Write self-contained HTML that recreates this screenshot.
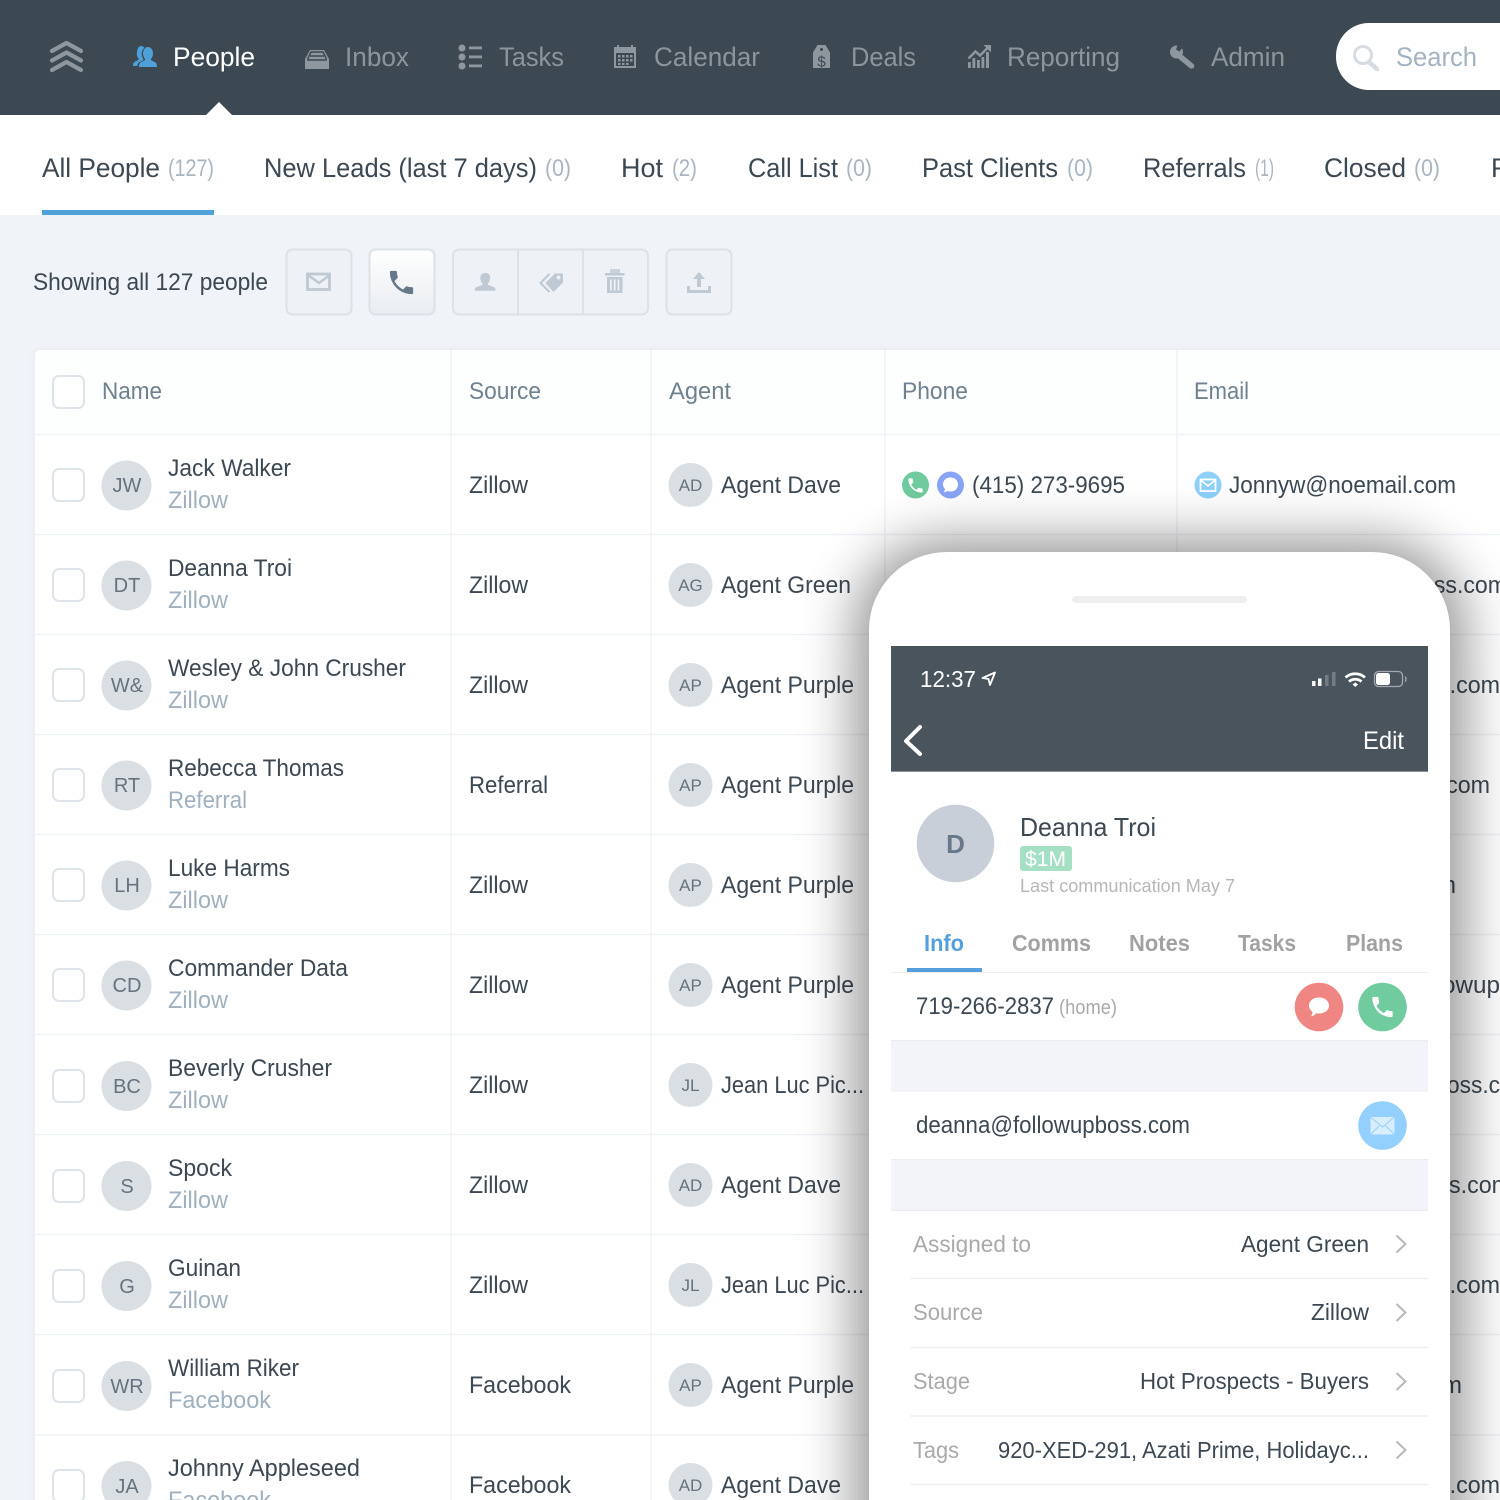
<!DOCTYPE html>
<html lang="en"><head><meta charset="utf-8"><title>People</title>
<style>
html,body{margin:0;padding:0;width:1500px;height:1500px;overflow:hidden;background:#f0f3f8}
svg{display:block}
text{font-family:"Liberation Sans",sans-serif;font-size:24px;fill:#3c4852}
.nav{font-size:27px;fill:#8d959c}
.tab{font-size:26.5px;fill:#3c4852}
.cnt{font-size:24px;fill:#a9b6c2}
.hd{fill:#6f808e;font-size:24px}
.sub{fill:#9fb0bf;font-size:24px}
.ini{font-size:20px;fill:#66737f;text-anchor:middle}
.ini2{font-size:17px;fill:#66737f;text-anchor:middle}
.ptab{font-size:23px;font-weight:bold;fill:#a2a2a2}
.lbl{fill:#a9a9a9;font-size:23px}
.val{fill:#3c4852;font-size:23px}
</style></head><body>
<svg width="1500" height="1500" viewBox="0 0 1500 1500" xmlns="http://www.w3.org/2000/svg">
<defs>
<filter id="blur" x="-30%" y="-30%" width="160%" height="160%"><feGaussianBlur stdDeviation="27"/></filter>
<filter id="soft" x="-5%" y="-5%" width="110%" height="110%"><feGaussianBlur stdDeviation="2"/></filter>
<linearGradient id="wg" x1="0" y1="0" x2="0" y2="1"><stop offset="0" stop-color="#fff"/><stop offset="1" stop-color="#e9edf0"/></linearGradient>
<symbol id="ph" viewBox="0 0 24 24"><path d="M6.6 10.8c1.4 2.8 3.8 5.1 6.6 6.6l2.2-2.2c.3-.3.7-.4 1-.2 1.1.4 2.3.6 3.6.6.6 0 1 .4 1 1V20c0 .6-.4 1-1 1C10.6 21 3 13.4 3 4c0-.6.4-1 1-1h3.5c.6 0 1 .4 1 1 0 1.3.2 2.5.6 3.6.1.3 0 .7-.2 1z"/></symbol>
</defs>
<rect width="1500" height="1500" fill="#f0f3f8"/>

<!-- top nav -->
<rect width="1500" height="115" fill="#3c4852"/>
<path d="M206 115L219 102L232 115Z" fill="#fff"/>
<g fill="none" stroke="#8f979e" stroke-width="4.2" stroke-linecap="round" stroke-linejoin="round">
<path d="M52 51L66.500 43L81 51"/><path d="M52 60.500L66.500 52.500L81 60.500"/><path d="M52 70L66.500 62L81 70"/>
</g>
<g fill="#4f9fd8">
<path d="M148 47c3 0 5 3 5 6.500 0 2.500-1 4.500-2.200 5.500 0 1.500 2 2 4 3 1.500.7 2.200 2 2.200 5h-18c0-3 .7-4.300 2.200-5 2-1 4-1.500 4-3-1.200-1-2.200-3-2.200-5.500 0-3.500 2-6.500 5-6.500z"/>
<path d="M141 46c1.500 0 2.800.8 3.500 1.800-1.800 1.500-2.800 3.500-2.800 6 0 2.500 1 4.500 2 6-1 1-3 1.500-4.500 2.500-1 .7-1.700 2-1.900 3.700H133c0-2.700.8-3.800 2.200-4.500 1.800-.9 3.500-1.300 3.600-2.700-1.100-1-2-2.800-2-5 0-4 1.800-7.800 4.200-7.800z"/>
</g>
<text class="nav" x="173" y="66" textLength="82" lengthAdjust="spacingAndGlyphs" style="fill:#fff">People</text>
<path d="M310 50h14l5 9v10h-24V59z" fill="#8f979e"/><path d="M308 60h18v-2l-3-6h-12l-3 6zM310 56h14" fill="none" stroke="#3c4852" stroke-width="1.500"/>
<text class="nav" x="345" y="66" textLength="64" lengthAdjust="spacingAndGlyphs">Inbox</text>
<g fill="#8f979e"><circle cx="462" cy="48" r="3.500"/><circle cx="462" cy="57" r="3.500"/><circle cx="462" cy="66" r="3.500"/><rect x="469" y="46.500" width="13" height="2.800"/><rect x="469" y="55.500" width="13" height="2.800"/><rect x="469" y="64.500" width="13" height="2.800"/></g>
<text class="nav" x="499" y="66" textLength="65" lengthAdjust="spacingAndGlyphs">Tasks</text>
<g fill="#8f979e"><path d="M614 47h3v-2h2v2h12v-2h2v2h3v21h-22zM616 53v13h18V53z" fill-rule="evenodd"/>
<path d="M618 55h2.500v2.500H618zM622 55h2.500v2.500H622zM626 55h2.500v2.500H626zM630 55h2.500v2.500H630zM618 59h2.500v2.500H618zM622 59h2.500v2.500H622zM626 59h2.500v2.500H626zM630 59h2.500v2.500H630zM618 63h2.500v2H618zM622 63h2.500v2H622zM626 63h2.500v2H626z"/></g>
<text class="nav" x="654" y="66" textLength="106" lengthAdjust="spacingAndGlyphs">Calendar</text>
<path d="M817.500 45h8l4.500 7.500V68h-17V52.500z" fill="#8f979e"/><circle cx="821.500" cy="49.500" r="1.500" fill="#3c4852"/>
<text x="821.500" y="66.500" style="font-size:15px;fill:#3c4852" text-anchor="middle">$</text>
<text class="nav" x="851" y="66" textLength="65" lengthAdjust="spacingAndGlyphs">Deals</text>
<g fill="#8f979e"><rect x="968" y="62" width="2.800" height="6"/><rect x="972.500" y="58" width="2.800" height="10"/><rect x="977" y="60" width="2.800" height="8"/><rect x="981.500" y="57" width="2.800" height="11"/><rect x="986" y="52" width="3" height="16"/><path d="M983.500 45h7.500v7.500z"/></g>
<path d="M968.500 58.500L975.500 51.500L980 55.500L988.500 47" fill="none" stroke="#8f979e" stroke-width="2.500"/>
<text class="nav" x="1007" y="66" textLength="113" lengthAdjust="spacingAndGlyphs">Reporting</text>
<circle cx="1176.500" cy="52" r="6.500" fill="#8f979e"/>
<path d="M1178 44L1184 46L1179.500 51.500L1176 49.500z" fill="#3c4852"/>
<path d="M1179.500 56L1191.500 66" stroke="#8f979e" stroke-width="5.500" stroke-linecap="round"/>
<text class="nav" x="1211" y="66" textLength="74" lengthAdjust="spacingAndGlyphs">Admin</text>
<rect x="1336" y="23" width="240" height="67" rx="33" fill="#fff"/>
<circle cx="1363" cy="55" r="8.500" fill="none" stroke="#d6dce2" stroke-width="3"/><path d="M1369 62l8 7" stroke="#d6dce2" stroke-width="4.500" stroke-linecap="round"/>
<text class="nav" x="1396" y="66" textLength="81" lengthAdjust="spacingAndGlyphs" style="fill:#a3b3c2">Search</text>

<!-- list tabs -->
<rect y="115" width="1500" height="100" fill="#fff"/>
<rect x="42" y="210" width="172" height="5" fill="#50a0da"/>
<text class="tab" x="42" y="177" textLength="118" lengthAdjust="spacingAndGlyphs">All People</text><text class="cnt" x="168" y="176" textLength="46" lengthAdjust="spacingAndGlyphs">(127)</text>
<text class="tab" x="264" y="177" textLength="273" lengthAdjust="spacingAndGlyphs">New Leads (last 7 days)</text><text class="cnt" x="545" y="176" textLength="26" lengthAdjust="spacingAndGlyphs">(0)</text>
<text class="tab" x="621" y="177" textLength="42" lengthAdjust="spacingAndGlyphs">Hot</text><text class="cnt" x="672" y="176" textLength="25" lengthAdjust="spacingAndGlyphs">(2)</text>
<text class="tab" x="748" y="177" textLength="90" lengthAdjust="spacingAndGlyphs">Call List</text><text class="cnt" x="846" y="176" textLength="26" lengthAdjust="spacingAndGlyphs">(0)</text>
<text class="tab" x="922" y="177" textLength="136" lengthAdjust="spacingAndGlyphs">Past Clients</text><text class="cnt" x="1067" y="176" textLength="26" lengthAdjust="spacingAndGlyphs">(0)</text>
<text class="tab" x="1143" y="177" textLength="103" lengthAdjust="spacingAndGlyphs">Referrals</text><text class="cnt" x="1255" y="176" textLength="19" lengthAdjust="spacingAndGlyphs">(1)</text>
<text class="tab" x="1324" y="177" textLength="82" lengthAdjust="spacingAndGlyphs">Closed</text><text class="cnt" x="1414" y="176" textLength="26" lengthAdjust="spacingAndGlyphs">(0)</text>
<text class="tab" x="1491" y="177">R</text>

<!-- toolbar -->
<text x="33" y="290" textLength="235" lengthAdjust="spacingAndGlyphs">Showing all 127 people</text>
<g fill="#eef1f5" stroke="#dde2e7" stroke-width="2">
<rect x="286.500" y="249.500" width="65" height="65" rx="6"/>
<rect x="369.500" y="249.500" width="65" height="65" rx="6" fill="url(#wg)"/>
<rect x="453" y="249.500" width="195" height="65" rx="6"/>
<path d="M518 249.500v65M583 249.500v65" fill="none"/>
<rect x="666.500" y="249.500" width="65" height="65" rx="6"/>
</g>
<rect x="307.500" y="274" width="22" height="15.500" fill="none" stroke="#bfc9d3" stroke-width="2.800"/><path d="M308 275l11 8 11-8" fill="none" stroke="#bfc9d3" stroke-width="2.500"/>
<use href="#ph" x="386" y="267" width="31" height="31" fill="#66798a"/>
<path d="M485.500 273c3.500 0 5 2.500 4.500 6-.3 2.200-1.200 3.800-2.300 4.800 0 1.500 2.500 2 5 2.800 1.800.6 3 1.500 3 4.200h-21c0-2.700 1.200-3.600 3-4.200 2.500-.8 5-1.300 5-2.800-1.100-1-2-2.600-2.300-4.800-.5-3.500 1-6 5.100-6z" fill="#bfc9d3"/>
<path d="M545.500 283l9.500-9.500h8v9l-9.500 9.500zM558.500 275.500a2 2 0 1 0 .1 0z" fill="#bfc9d3" fill-rule="evenodd"/><path d="M549.500 274l-9 9 9 9" fill="none" stroke="#bfc9d3" stroke-width="2"/>
<g fill="#bfc9d3"><rect x="605" y="273" width="19.500" height="2.500"/><rect x="611" y="270" width="8" height="2" fill="none" stroke="#bfc9d3" stroke-width="1.500"/><path d="M607 277h15.500v16H607zM610 279.500v11h1.800v-11zM613.800 279.500v11h1.800v-11zM617.600 279.500v11h1.800v-11z" fill-rule="evenodd"/></g>
<path d="M699 272l6 7h-4v8h-4v-8h-4zM687 286h3v4h18v-4h3v7h-24z" fill="#bfc9d3"/>

<!-- table -->
<rect x="34" y="349" width="1500" height="1200" rx="6" fill="#dfe4ea" filter="url(#soft)" opacity=".6"/>
<rect x="35" y="350" width="1500" height="1200" rx="5" fill="#fff"/>
<rect x="35" y="350" width="1500" height="84" rx="5" fill="#fdfefe"/>
<g stroke="#eff2f6" stroke-width="1.500" fill="none">
<path d="M35 434.500H1500M35 534.500H1500M35 634.500H1500M35 734.500H1500M35 834.500H1500M35 934.500H1500M35 1034.500H1500M35 1134.500H1500M35 1234.500H1500M35 1334.500H1500M35 1435H1500"/>
<path d="M451 350V1500M651 350V1500M885 350V1500M1177 350V1500"/>
</g>
<g fill="#fff" stroke="#dfe4ea" stroke-width="2">
<rect x="53" y="376" width="31" height="32" rx="6"/>
<rect x="53" y="469" width="31" height="32" rx="6"/><rect x="53" y="569" width="31" height="32" rx="6"/><rect x="53" y="669" width="31" height="32" rx="6"/><rect x="53" y="769" width="31" height="32" rx="6"/><rect x="53" y="869" width="31" height="32" rx="6"/><rect x="53" y="969" width="31" height="32" rx="6"/><rect x="53" y="1070" width="31" height="32" rx="6"/><rect x="53" y="1170" width="31" height="32" rx="6"/><rect x="53" y="1270" width="31" height="32" rx="6"/><rect x="53" y="1370" width="31" height="32" rx="6"/><rect x="53" y="1470" width="31" height="32" rx="6"/>
</g>
<text class="hd" x="102" y="399" textLength="60" lengthAdjust="spacingAndGlyphs">Name</text>
<text class="hd" x="469" y="399" textLength="72" lengthAdjust="spacingAndGlyphs">Source</text>
<text class="hd" x="669" y="399" textLength="62" lengthAdjust="spacingAndGlyphs">Agent</text>
<text class="hd" x="902" y="399" textLength="66" lengthAdjust="spacingAndGlyphs">Phone</text>
<text class="hd" x="1194" y="399" textLength="55" lengthAdjust="spacingAndGlyphs">Email</text>

<g fill="#dadfe4">
<circle cx="126.500" cy="485.500" r="25"/><circle cx="126.500" cy="585.500" r="25"/><circle cx="126.500" cy="685.500" r="25"/><circle cx="126.500" cy="785.500" r="25"/><circle cx="126.500" cy="885.500" r="25"/><circle cx="126.500" cy="985.500" r="25"/><circle cx="126.500" cy="1086" r="25"/><circle cx="126.500" cy="1186" r="25"/><circle cx="126.500" cy="1286" r="25"/><circle cx="126.500" cy="1386" r="25"/><circle cx="126.500" cy="1486" r="25"/>
<circle cx="690.500" cy="485" r="22"/><circle cx="690.500" cy="585" r="22"/><circle cx="690.500" cy="685" r="22"/><circle cx="690.500" cy="785" r="22"/><circle cx="690.500" cy="885" r="22"/><circle cx="690.500" cy="985" r="22"/><circle cx="690.500" cy="1085" r="22"/><circle cx="690.500" cy="1185" r="22"/><circle cx="690.500" cy="1285" r="22"/><circle cx="690.500" cy="1385" r="22"/><circle cx="690.500" cy="1485" r="22"/>
</g>

<text class="ini" x="127" y="492">JW</text><text x="168" y="476" textLength="123" lengthAdjust="spacingAndGlyphs">Jack Walker</text><text class="sub" x="168" y="508" textLength="60" lengthAdjust="spacingAndGlyphs">Zillow</text><text x="469" y="493" textLength="59" lengthAdjust="spacingAndGlyphs">Zillow</text><text class="ini2" x="690.500" y="491">AD</text><text x="721" y="493" textLength="120" lengthAdjust="spacingAndGlyphs">Agent Dave</text>
<text class="ini" x="127" y="592">DT</text><text x="168" y="576" textLength="124" lengthAdjust="spacingAndGlyphs">Deanna Troi</text><text class="sub" x="168" y="608" textLength="60" lengthAdjust="spacingAndGlyphs">Zillow</text><text x="469" y="593" textLength="59" lengthAdjust="spacingAndGlyphs">Zillow</text><text class="ini2" x="690.500" y="591">AG</text><text x="721" y="593" textLength="130" lengthAdjust="spacingAndGlyphs">Agent Green</text>
<text class="ini" x="127" y="692">W&amp;</text><text x="168" y="676" textLength="238" lengthAdjust="spacingAndGlyphs">Wesley &amp; John Crusher</text><text class="sub" x="168" y="708" textLength="60" lengthAdjust="spacingAndGlyphs">Zillow</text><text x="469" y="693" textLength="59" lengthAdjust="spacingAndGlyphs">Zillow</text><text class="ini2" x="690.500" y="691">AP</text><text x="721" y="693" textLength="133" lengthAdjust="spacingAndGlyphs">Agent Purple</text>
<text class="ini" x="127" y="792">RT</text><text x="168" y="776" textLength="176" lengthAdjust="spacingAndGlyphs">Rebecca Thomas</text><text class="sub" x="168" y="808" textLength="79" lengthAdjust="spacingAndGlyphs">Referral</text><text x="469" y="793" textLength="79" lengthAdjust="spacingAndGlyphs">Referral</text><text class="ini2" x="690.500" y="791">AP</text><text x="721" y="793" textLength="133" lengthAdjust="spacingAndGlyphs">Agent Purple</text>
<text class="ini" x="127" y="892">LH</text><text x="168" y="876" textLength="122" lengthAdjust="spacingAndGlyphs">Luke Harms</text><text class="sub" x="168" y="908" textLength="60" lengthAdjust="spacingAndGlyphs">Zillow</text><text x="469" y="893" textLength="59" lengthAdjust="spacingAndGlyphs">Zillow</text><text class="ini2" x="690.500" y="891">AP</text><text x="721" y="893" textLength="133" lengthAdjust="spacingAndGlyphs">Agent Purple</text>
<text class="ini" x="127" y="992">CD</text><text x="168" y="976" textLength="180" lengthAdjust="spacingAndGlyphs">Commander Data</text><text class="sub" x="168" y="1008" textLength="60" lengthAdjust="spacingAndGlyphs">Zillow</text><text x="469" y="993" textLength="59" lengthAdjust="spacingAndGlyphs">Zillow</text><text class="ini2" x="690.500" y="991">AP</text><text x="721" y="993" textLength="133" lengthAdjust="spacingAndGlyphs">Agent Purple</text>
<text class="ini" x="127" y="1093">BC</text><text x="168" y="1076" textLength="164" lengthAdjust="spacingAndGlyphs">Beverly Crusher</text><text class="sub" x="168" y="1108" textLength="60" lengthAdjust="spacingAndGlyphs">Zillow</text><text x="469" y="1093" textLength="59" lengthAdjust="spacingAndGlyphs">Zillow</text><text class="ini2" x="690.500" y="1091">JL</text><text x="721" y="1093" textLength="143" lengthAdjust="spacingAndGlyphs">Jean Luc Pic...</text>
<text class="ini" x="127" y="1193">S</text><text x="168" y="1176" textLength="64" lengthAdjust="spacingAndGlyphs">Spock</text><text class="sub" x="168" y="1208" textLength="60" lengthAdjust="spacingAndGlyphs">Zillow</text><text x="469" y="1193" textLength="59" lengthAdjust="spacingAndGlyphs">Zillow</text><text class="ini2" x="690.500" y="1191">AD</text><text x="721" y="1193" textLength="120" lengthAdjust="spacingAndGlyphs">Agent Dave</text>
<text class="ini" x="127" y="1293">G</text><text x="168" y="1276" textLength="73" lengthAdjust="spacingAndGlyphs">Guinan</text><text class="sub" x="168" y="1308" textLength="60" lengthAdjust="spacingAndGlyphs">Zillow</text><text x="469" y="1293" textLength="59" lengthAdjust="spacingAndGlyphs">Zillow</text><text class="ini2" x="690.500" y="1291">JL</text><text x="721" y="1293" textLength="143" lengthAdjust="spacingAndGlyphs">Jean Luc Pic...</text>
<text class="ini" x="127" y="1393">WR</text><text x="168" y="1376" textLength="131" lengthAdjust="spacingAndGlyphs">William Riker</text><text class="sub" x="168" y="1408" textLength="103" lengthAdjust="spacingAndGlyphs">Facebook</text><text x="469" y="1393" textLength="102" lengthAdjust="spacingAndGlyphs">Facebook</text><text class="ini2" x="690.500" y="1391">AP</text><text x="721" y="1393" textLength="133" lengthAdjust="spacingAndGlyphs">Agent Purple</text>
<text class="ini" x="127" y="1493">JA</text><text x="168" y="1476" textLength="192" lengthAdjust="spacingAndGlyphs">Johnny Appleseed</text><text class="sub" x="168" y="1508" textLength="103" lengthAdjust="spacingAndGlyphs">Facebook</text><text x="469" y="1493" textLength="102" lengthAdjust="spacingAndGlyphs">Facebook</text><text class="ini2" x="690.500" y="1491">AD</text><text x="721" y="1493" textLength="120" lengthAdjust="spacingAndGlyphs">Agent Dave</text>

<!-- first row phone/email -->
<circle cx="915.500" cy="485" r="13.500" fill="#6fca9e"/><use href="#ph" x="906" y="476" width="19" height="19" fill="#fff"/>
<circle cx="950.500" cy="485" r="13.500" fill="#8aa4f5"/><path d="M950.500 477.500c4.500 0 7.500 3 7.500 7s-3 7-7.500 7c-1 0-2-.2-2.800-.5l-3.700 1.500 1-3.500c-1.300-1.200-2-2.800-2-4.500 0-4 3-7 7.500-7z" fill="#fff"/>
<text x="972" y="493" textLength="153" lengthAdjust="spacingAndGlyphs">(415) 273-9695</text>
<circle cx="1208" cy="485" r="13.500" fill="#8fd0fb"/><rect x="1200.500" y="479.500" width="15" height="11.500" fill="none" stroke="#fff" stroke-width="1.800"/><path d="M1201 480.500l7 5.500 7-5.500" fill="none" stroke="#fff" stroke-width="1.600"/>
<text x="1229" y="493" textLength="227" lengthAdjust="spacingAndGlyphs">Jonnyw@noemail.com</text>

<!-- email tails visible right of phone -->
<text x="1421" y="593" textLength="86" lengthAdjust="spacingAndGlyphs">oss.com</text>
<text x="1438" y="693" textLength="62" lengthAdjust="spacingAndGlyphs">s.com</text>
<text x="1428" y="793" textLength="62" lengthAdjust="spacingAndGlyphs">s.com</text>
<text x="1436" y="893" textLength="20" lengthAdjust="spacingAndGlyphs">m</text>
<text x="1442" y="993" textLength="58" lengthAdjust="spacingAndGlyphs">owup</text>
<text x="1447" y="1093" textLength="53" lengthAdjust="spacingAndGlyphs">oss.c</text>
<text x="1449" y="1193" textLength="62" lengthAdjust="spacingAndGlyphs">s.com</text>
<text x="1438" y="1293" textLength="62" lengthAdjust="spacingAndGlyphs">s.com</text>
<text x="1442" y="1393" textLength="20" lengthAdjust="spacingAndGlyphs">m</text>
<text x="1438" y="1493" textLength="62" lengthAdjust="spacingAndGlyphs">s.com</text>

<!-- phone -->
<rect x="855" y="540" width="610" height="1100" rx="90" fill="#000" opacity=".42" filter="url(#blur)"/>
<rect x="869" y="552" width="581" height="1100" rx="78" fill="#fff"/>
<rect x="1072" y="596" width="175" height="7" rx="3.500" fill="#efefef"/>
<rect x="891" y="646" width="537" height="125" fill="#4a545d"/>
<rect x="891" y="771" width="537" height="1" fill="#8b9298"/>
<text x="920" y="687" textLength="56" lengthAdjust="spacingAndGlyphs" style="fill:#fff;font-size:23px">12:37</text>
<path d="M995 672.500l-12.500 5.500 6 1 1.500 6z" fill="none" stroke="#fff" stroke-width="1.800" stroke-linejoin="round"/>
<g fill="#fff"><rect x="1312" y="681" width="3.500" height="5"/><rect x="1318" y="678.500" width="3.500" height="7.500"/></g>
<g fill="#757d84"><rect x="1325" y="675" width="3.500" height="11"/><rect x="1332" y="672" width="3.500" height="14"/></g>
<path d="M1345.500 677.500c5.500-5 14-5 19.500 0M1349 681.500c3.500-3 9-3 12.500 0" fill="none" stroke="#fff" stroke-width="2.800"/><path d="M1352.500 684.500l2.800-2 2.800 2-2.800 2.500z" fill="#fff"/>
<rect x="1374.500" y="671.500" width="28" height="15" rx="4" fill="none" stroke="#a4a9ae" stroke-width="1.300"/><rect x="1376" y="673" width="14" height="12" rx="2.500" fill="#fff"/><path d="M1405 676.500c1.300.8 1.300 4.200 0 5" stroke="#a4a9ae" stroke-width="1.300" fill="none"/>
<path d="M920 727l-14 14 14 13" fill="none" stroke="#fff" stroke-width="4" stroke-linecap="round" stroke-linejoin="round"/>
<text x="1363" y="749" textLength="41" lengthAdjust="spacingAndGlyphs" style="fill:#fff;font-size:25px">Edit</text>

<circle cx="955.500" cy="843.500" r="38.800" fill="#c9cfd8"/>
<text x="955.500" y="853" text-anchor="middle" style="font-size:26px;font-weight:bold;fill:#67788a">D</text>
<text x="1020" y="836" textLength="136" lengthAdjust="spacingAndGlyphs" style="font-size:26px">Deanna Troi</text>
<rect x="1020" y="846" width="52" height="25" rx="3" fill="#a6e0c4"/>
<text x="1025" y="866" textLength="41" lengthAdjust="spacingAndGlyphs" style="font-size:21px;fill:#fff">$1M</text>
<text x="1020" y="892" textLength="215" lengthAdjust="spacingAndGlyphs" style="font-size:18px;fill:#b7b7b7">Last communication May 7</text>

<text class="ptab" x="924" y="951" textLength="40" lengthAdjust="spacingAndGlyphs" style="fill:#55a0dc">Info</text>
<text class="ptab" x="1012" y="951" textLength="79" lengthAdjust="spacingAndGlyphs">Comms</text>
<text class="ptab" x="1129" y="951" textLength="61" lengthAdjust="spacingAndGlyphs">Notes</text>
<text class="ptab" x="1238" y="951" textLength="58" lengthAdjust="spacingAndGlyphs">Tasks</text>
<text class="ptab" x="1346" y="951" textLength="57" lengthAdjust="spacingAndGlyphs">Plans</text>
<rect x="891" y="972" width="537" height="1" fill="#eceef0"/>
<rect x="907" y="968" width="75" height="4" fill="#55a0dc"/>

<text x="916" y="1014" textLength="138" lengthAdjust="spacingAndGlyphs">719-266-2837</text>
<text x="1059" y="1014" textLength="58" lengthAdjust="spacingAndGlyphs" style="font-size:20px;fill:#aaa">(home)</text>
<circle cx="1319" cy="1007" r="24.300" fill="#f08684"/>
<path d="M1319 997.500c6 0 10 3.500 10 8s-4 8-10 8c-1 0-2 0-3-.3-1 1.800-3 2.800-5 3 1-1.200 1.500-2.700 1.500-4.500-2.300-1.400-3.500-3.600-3.500-6.200 0-4.500 4-8 10-8z" fill="#fff"/>
<circle cx="1382.500" cy="1007" r="24.300" fill="#70cc9f"/><use href="#ph" x="1369" y="993.500" width="27" height="27" fill="#fff"/>
<rect x="891" y="1040" width="537" height="51" fill="#f2f4f9"/><path d="M891 1040.500H1428M891 1091H1428" stroke="#eaedf0"/>
<text x="916" y="1133" textLength="274" lengthAdjust="spacingAndGlyphs">deanna@followupboss.com</text>
<circle cx="1382.500" cy="1125.500" r="24.300" fill="#93cfff"/>
<rect x="1370.500" y="1117" width="24" height="17.500" fill="#d8eeff"/><path d="M1370.500 1117l12 10 12-10M1370.500 1134.500l9-9M1394.500 1134.500l-9-9" fill="none" stroke="#93cfff" stroke-width="1"/>
<rect x="891" y="1159" width="537" height="51" fill="#f2f4f9"/><path d="M891 1159.500H1428M891 1210.500H1428" stroke="#eaedf0"/>

<text class="lbl" x="913" y="1252" textLength="118" lengthAdjust="spacingAndGlyphs">Assigned to</text>
<text class="val" x="1241" y="1252" textLength="128" lengthAdjust="spacingAndGlyphs">Agent Green</text>
<text class="lbl" x="913" y="1320" textLength="70" lengthAdjust="spacingAndGlyphs">Source</text>
<text class="val" x="1311" y="1320" textLength="58" lengthAdjust="spacingAndGlyphs">Zillow</text>
<text class="lbl" x="913" y="1389" textLength="57" lengthAdjust="spacingAndGlyphs">Stage</text>
<text class="val" x="1140" y="1389" textLength="229" lengthAdjust="spacingAndGlyphs">Hot Prospects - Buyers</text>
<text class="lbl" x="913" y="1458" textLength="46" lengthAdjust="spacingAndGlyphs">Tags</text>
<text class="val" x="998" y="1458" textLength="371" lengthAdjust="spacingAndGlyphs">920-XED-291, Azati Prime, Holidayc...</text>
<g fill="none" stroke="#b8b8b8" stroke-width="2"><path d="M1396.500 1235.500l9 8.500-9 8.500M1396.500 1304l9 8.500-9 8.500M1396.500 1373l9 8.500-9 8.500M1396.500 1441.500l9 8.500-9 8.500"/></g>
<path d="M910 1278.500H1428M910 1347.500H1428M910 1416H1428M910 1484.500H1428" stroke="#eff0f2" stroke-width="1.500"/>
</svg>
</body></html>
